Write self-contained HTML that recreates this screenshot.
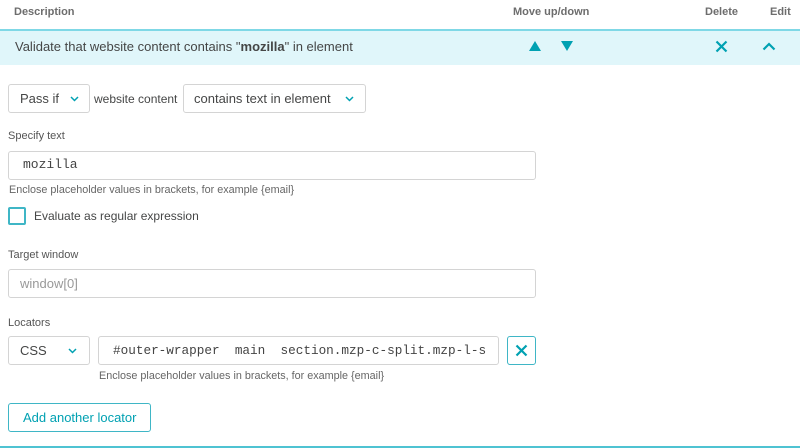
<!DOCTYPE html>
<html><head><meta charset="utf-8"><style>
*{box-sizing:border-box;margin:0;padding:0}
body{width:800px;height:448px;background:#fff;font-family:"Liberation Sans",sans-serif;color:#454646;position:relative;overflow:hidden}
.a{position:absolute;white-space:nowrap}
.h{font-size:11px;color:#6d6d6d;font-weight:bold;top:6px}
.lbl{font-size:11px;color:#555;left:8px}
.box{position:absolute;border:1px solid #d4d4d4;border-radius:3px;background:#fff}
.mono{font-family:"Liberation Mono","DejaVu Sans Mono",monospace}
.hint{font-size:10.8px;color:#666}
svg{position:absolute}
</style></head><body>
<div class="a h" style="left:14px">Description</div>
<div class="a h" style="left:513px">Move up/down</div>
<div class="a h" style="left:705px">Delete</div>
<div class="a h" style="left:770px">Edit</div>
<div class="a" style="left:0;top:29px;width:800px;height:2px;background:#7fd8e6"></div>
<div class="a" style="left:0;top:31px;width:800px;height:34px;background:#e0f6fa"></div>
<div class="a" style="left:15px;top:39px;font-size:13px;color:#454646">Validate that website content contains "<b>mozilla</b>" in element</div>
<svg style="left:529px;top:41px" width="12" height="10"><path d="M6 0L12 10H0Z" fill="#00a1b2"/></svg>
<svg style="left:561px;top:41px" width="12" height="10"><path d="M0 0H12L6 10Z" fill="#00a1b2"/></svg>
<svg style="left:715px;top:40px" width="13" height="13"><path d="M1.5 1.5L11.5 11.5M11.5 1.5L1.5 11.5" stroke="#00a1b2" stroke-width="2.2"/></svg>
<svg style="left:762px;top:42px" width="14" height="9"><path d="M1.5 7.5L7 2L12.5 7.5" stroke="#00a1b2" stroke-width="2.2" fill="none"/></svg>

<div class="box" style="left:8px;top:84px;width:82px;height:29px"></div>
<div class="a" style="left:20px;top:91px;font-size:13px">Pass if</div>
<svg style="left:70px;top:96px" width="9" height="6"><path d="M1 1L4.5 4.5L8 1" stroke="#00a1b2" stroke-width="1.5" fill="none"/></svg>
<div class="a" style="left:94px;top:92px;font-size:12px">website content</div>
<div class="box" style="left:183px;top:84px;width:183px;height:29px"></div>
<div class="a" style="left:194px;top:91px;font-size:13px">contains text in element</div>
<svg style="left:345px;top:96px" width="9" height="6"><path d="M1 1L4.5 4.5L8 1" stroke="#00a1b2" stroke-width="1.5" fill="none"/></svg>

<div class="a lbl" style="top:130px">Specify text</div>
<div class="box" style="left:8px;top:151px;width:528px;height:29px"></div>
<div class="a mono" style="left:23px;top:157px;font-size:13px;color:#444">mozilla</div>
<div class="a hint" style="left:9px;top:184px">Enclose placeholder values in brackets, for example {email}</div>
<div class="a" style="left:8px;top:207px;width:18px;height:18px;border:2px solid #3fb6c6;border-radius:2px"></div>
<div class="a" style="left:34px;top:209px;font-size:12px">Evaluate as regular expression</div>

<div class="a lbl" style="top:249px">Target window</div>
<div class="box" style="left:8px;top:269px;width:528px;height:29px"></div>
<div class="a" style="left:20px;top:276px;font-size:13px;color:#999">window[0]</div>

<div class="a lbl" style="top:317px">Locators</div>
<div class="box" style="left:8px;top:336px;width:82px;height:29px"></div>
<div class="a" style="left:20px;top:343px;font-size:13px">CSS</div>
<svg style="left:68px;top:348px" width="9" height="6"><path d="M1 1L4.5 4.5L8 1" stroke="#00a1b2" stroke-width="1.5" fill="none"/></svg>
<div class="box" style="left:98px;top:336px;width:401px;height:29px;overflow:hidden"></div>
<div class="a mono" style="left:113px;top:343px;font-size:12.7px;color:#444;white-space:pre;width:380px;overflow:hidden">#outer-wrapper  main  section.mzp-c-split.mzp-l-s</div>
<div class="a" style="left:507px;top:336px;width:29px;height:29px;border:1px solid #3fb6c6;border-radius:3px"></div>
<svg style="left:515px;top:344px" width="13" height="13"><path d="M1.5 1.5L11.5 11.5M11.5 1.5L1.5 11.5" stroke="#00a1b2" stroke-width="2.2"/></svg>
<div class="a hint" style="left:99px;top:370px">Enclose placeholder values in brackets, for example {email}</div>

<div class="a" style="left:8px;top:403px;width:143px;height:29px;border:1px solid #3fb6c6;border-radius:3px"></div>
<div class="a" style="left:23px;top:410px;font-size:13px;color:#00a1b2">Add another locator</div>
<div class="a" style="left:0;top:446px;width:800px;height:2px;background:#4fc3d2"></div>
</body></html>
